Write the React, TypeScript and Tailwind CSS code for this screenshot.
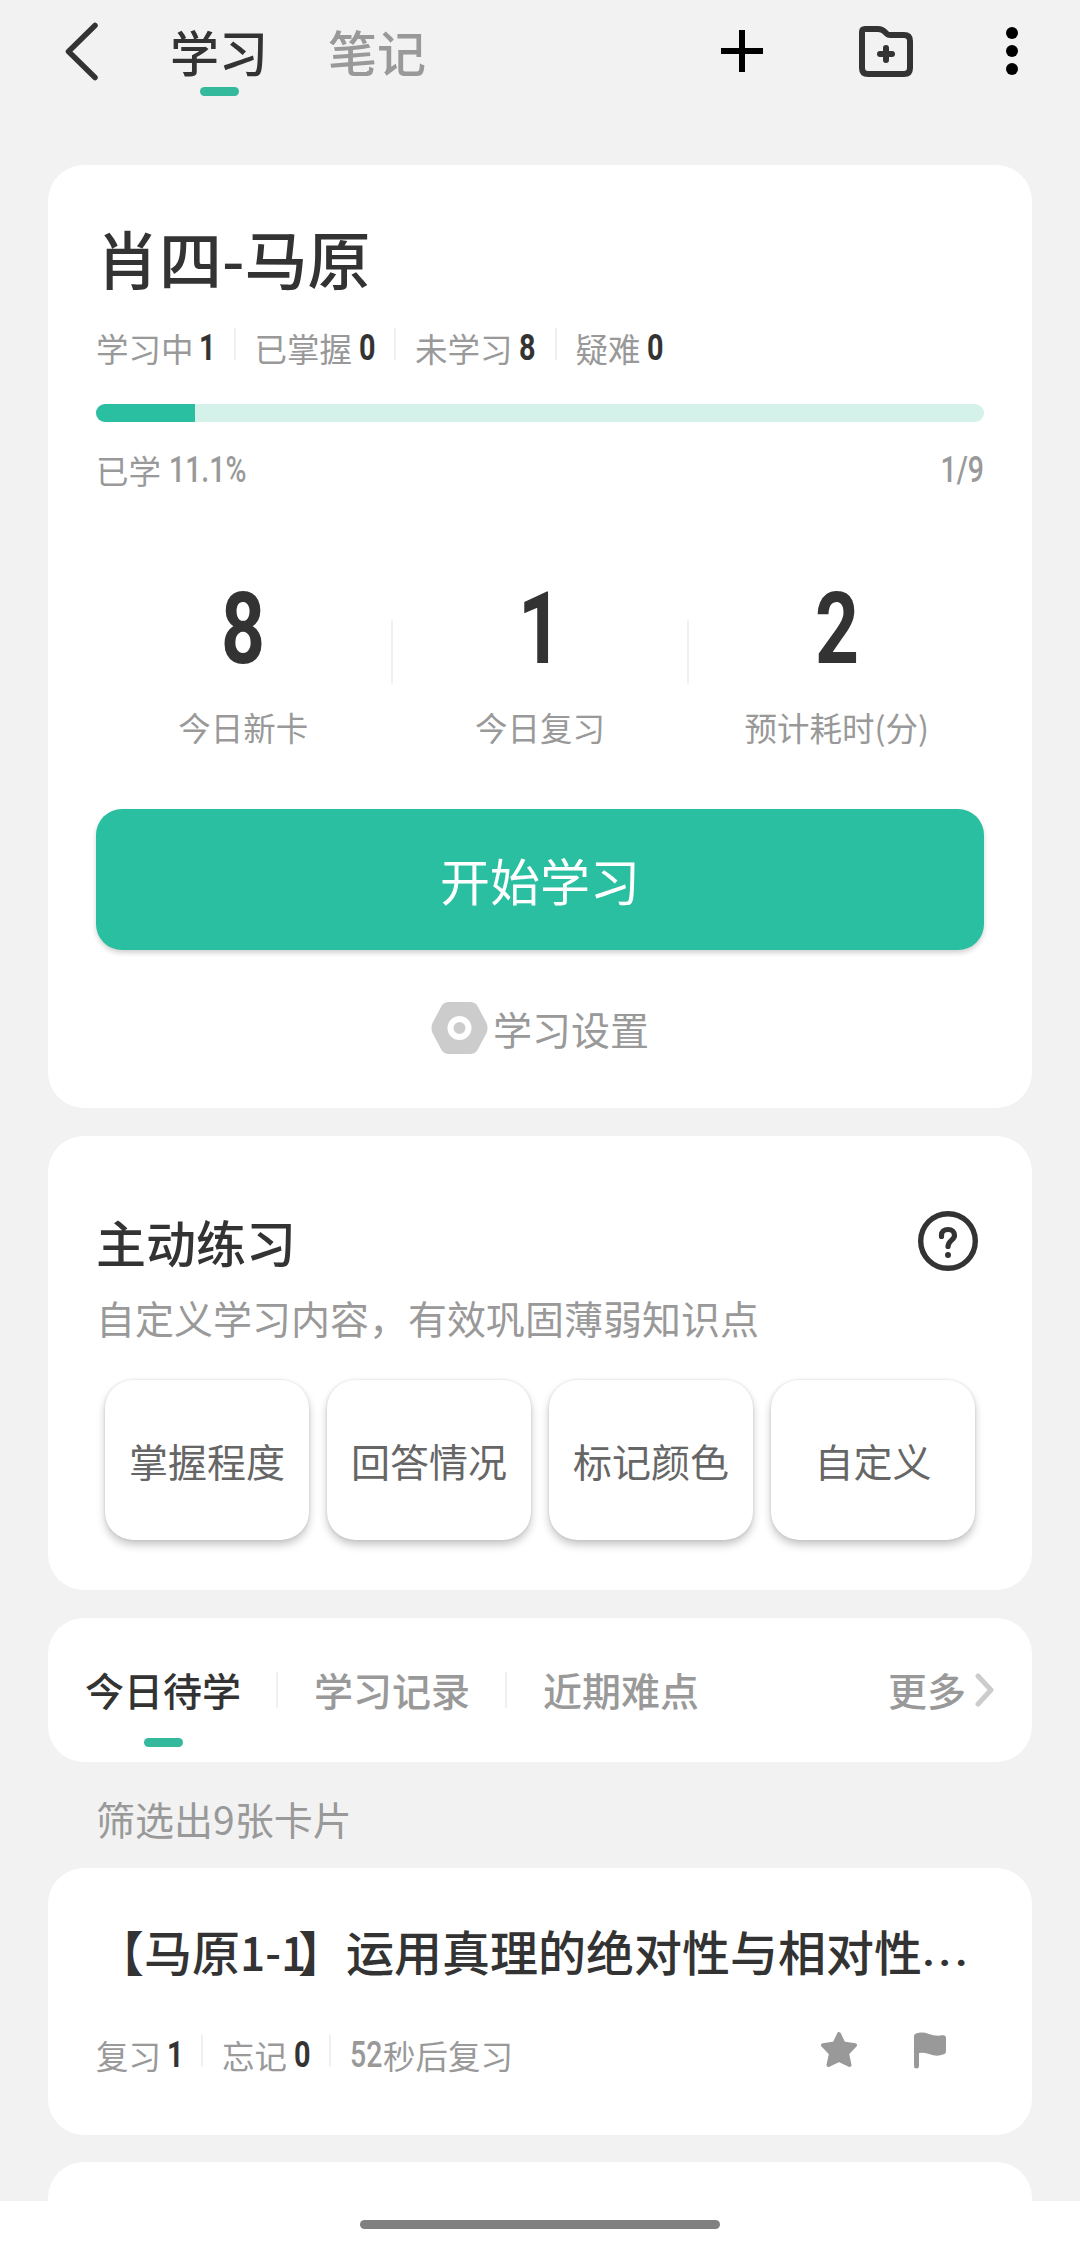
import { Fragment } from "react";
import clsx from "clsx";

const counters = [
  { label: "学习中", value: "1" },
  { label: "已掌握", value: "0" },
  { label: "未学习", value: "8" },
  { label: "疑难", value: "0" },
];

const stats = [
  { label: "今日新卡", value: "8" },
  { label: "今日复习", value: "1" },
  { label: "预计耗时(分)", value: "2" },
];

const practices = ["掌握程度", "回答情况", "标记颜色", "自定义"];

const tabs = ["今日待学", "学习记录", "近期难点"];

// small bold counter digit, squeezed to a condensed width
function Num({ value }: { value: string }) {
  return (
    <span
      className={clsx(
        "ml-[7px] flex justify-center text-[36px] font-bold text-[#333]",
        value === "1" ? "w-[14px]" : "w-[16px]"
      )}
    >
      <span className="inline-block scale-x-[0.8] font-[Roboto]">{value}</span>
    </span>
  );
}

function Divider({ className }: { className?: string }) {
  return <span className={clsx("w-[2px] shrink-0 bg-[#f0f0f0]", className)} />;
}

function Header() {
  return (
    <header className="flex h-[165px] items-start">
      <svg className="ml-[64px] mt-[20px] h-[63px] w-[36px] shrink-0" viewBox="0 0 36 63" fill="none">
        <path d="M31 5.500L4.500 31.500L31 57.500" stroke="#333" strokeWidth="5.500" strokeLinecap="round" strokeLinejoin="round" />
      </svg>
      <div className="ml-[70px] flex w-[98px] flex-col items-center">
        <span className="mt-[15px] text-[49px] leading-[72px] font-medium text-[#333]">学习</span>
        <span className="h-[9px] w-[39px] rounded-full bg-[#35b99d]" />
      </div>
      <span className="ml-[60px] mt-[15px] text-[49px] leading-[72px] font-medium text-[#999]">笔记</span>
      <svg className="ml-[295px] mt-[30px] h-[42px] w-[42px]" viewBox="0 0 42 42">
        <path d="M21 0V42M0 21H42" stroke="#000" strokeWidth="6" />
      </svg>
      <svg className="ml-[96px] mt-[26px] h-[51px] w-[54px]" viewBox="0 0 54 51" fill="none" stroke="#333" strokeLinecap="round" strokeLinejoin="round">
        <path d="M6 3H19Q23 3 26 6L28 8Q29 9 31 9H45Q51 9 51 15V42Q51 48 45 48H9Q3 48 3 42V6Q3 3 6 3Z" strokeWidth="6" />
        <path d="M27 22V34M21 28H33" strokeWidth="6" />
      </svg>
      <svg className="ml-[93px] mt-[27px] h-[48px] w-[12px]" viewBox="0 0 12 48">
        <circle cx="6" cy="6" r="6" />
        <circle cx="6" cy="24" r="6" />
        <circle cx="6" cy="42" r="6" />
      </svg>
    </header>
  );
}

function DeckCard() {
  return (
    <section className="h-[943px] rounded-[36px] bg-white px-[48px] pt-[48px]">
      <h1 className="h-[88px] text-[63px] leading-[88px] font-medium text-[#333]">肖四-马原</h1>
      <div className="mt-[23px] flex h-[48px] items-center leading-[48px]">
        {counters.map((c, i) => (
          <Fragment key={c.label}>
            {i > 0 && <Divider className="mx-[19px] -mt-[8px] h-[32px]" />}
            <span className="text-[32.500px] text-[#999]">{c.label}</span>
            <Num value={c.value} />
          </Fragment>
        ))}
      </div>
      <div className="mt-[32px] h-[18px] overflow-hidden rounded-full bg-[#d4f1ea]">
        <div className="h-full w-[99px] bg-[#29bfa0]" />
      </div>
      <div className="mt-[24px] flex h-[48px] items-center justify-between leading-[48px] text-[#999]">
        <div className="flex items-center">
          <span className="text-[32.500px]">已学</span>
          <span className="ml-[8px] w-[78px] origin-left scale-x-[0.79] font-[Roboto] text-[36px] font-medium">11.1%</span>
        </div>
        <span className="origin-right scale-x-[0.79] font-[Roboto] text-[36px] font-medium">1/9</span>
      </div>

      <div className="mt-[77px] flex h-[180px]">
        {stats.map((s, i) => (
          <Fragment key={s.label}>
            {i > 0 && <Divider className="mt-[49px] h-[64px]" />}
            <div className="flex flex-1 flex-col items-center">
              <span className="h-[116px] scale-x-[0.76] font-[Roboto] text-[101px] leading-[116px] font-bold text-[#333]">
                {s.value}
              </span>
              <span className="mt-[16px] text-[32.500px] leading-[48px] text-[#999]">{s.label}</span>
            </div>
          </Fragment>
        ))}
      </div>

      <button className="mt-[58px] flex h-[141px] w-full items-center justify-center rounded-[26px] bg-[#29bfa0] text-[50px] text-white shadow-[0_3px_5px_rgba(0,0,0,0.18)]">
        开始学习
      </button>
      <div className="mt-[48px] flex h-[60px] items-center justify-center">
        <svg className="h-[54px] w-[57px]" viewBox="0 0 57 54">
          <path d="M18 1H39Q44 1 46.500 5L55.500 22Q57.500 27 55.500 32L46.500 49Q44 53 39 53H18Q13 53 10.500 49L1.500 32Q-.5 27 1.500 22L10.500 5Q13 1 18 1Z" fill="#ccc" />
          <circle cx="28.500" cy="27" r="9" fill="#ccc" stroke="#fff" strokeWidth="6" />
        </svg>
        <span className="ml-[5px] text-[39px] leading-[60px] text-[#999]">学习设置</span>
      </div>
    </section>
  );
}

function PracticeCard() {
  return (
    <section className="mt-[28px] h-[454px] rounded-[36px] bg-white px-[48px] pt-[66px]">
      <div className="flex h-[78px] items-center justify-between">
        <h2 className="text-[50px] leading-[72px] font-medium text-[#333]">主动练习</h2>
        <svg className="mr-[6px] h-[60px] w-[60px]" viewBox="0 0 60 60" fill="none" stroke="#333">
          <circle cx="30" cy="30" r="27.300" strokeWidth="5.400" />
          <path d="M23.500 25.500V24C23.500 20.500 26 18.500 30 18.500C34 18.500 36.500 21 36.500 24.500C36.500 29 30 29.500 30 35.500" strokeWidth="5.200" strokeLinecap="round" />
          <circle cx="30" cy="44" r="3" fill="#333" stroke="none" />
        </svg>
      </div>
      <p className="mt-[7px] text-[39px] leading-[60px] text-[#999]">自定义学习内容，有效巩固薄弱知识点</p>
      <div className="mx-[9px] mt-[33px] grid grid-cols-4 gap-[18px]">
        {practices.map((p) => (
          <button
            key={p}
            className="h-[160px] rounded-[28px] bg-white text-[39px] text-[#666] shadow-[0_5px_8px_rgba(0,0,0,0.22),0_0_3px_rgba(0,0,0,0.12)]"
          >
            {p}
          </button>
        ))}
      </div>
    </section>
  );
}

function TabsCard() {
  return (
    <section className="mt-[28px] flex h-[144px] rounded-[36px] bg-white pl-[37px] pr-[37px] pt-[41px]">
      {tabs.map((t, i) => (
        <Fragment key={t}>
          {i > 0 && <Divider className="ml-[35px] mr-[36px] mt-[13px] h-[36px]" />}
          <div className="flex flex-col items-center">
            <span
              className={clsx(
                "text-[39px] leading-[60px] font-medium",
                i === 0 ? "text-[#333]" : "text-[#999]"
              )}
            >
              {t}
            </span>
            {i === 0 && <span className="mt-[19px] h-[9px] w-[39px] rounded-full bg-[#35b99d]" />}
          </div>
        </Fragment>
      ))}
      <span className="ml-auto text-[39px] leading-[60px] font-medium text-[#999]">更多</span>
      <svg className="ml-[9px] mt-[14px] h-[34px] w-[20px]" viewBox="0 0 20 34" fill="none">
        <path d="M3 3L16 17L3 31" stroke="#ccc" strokeWidth="5" strokeLinecap="round" strokeLinejoin="round" />
      </svg>
    </section>
  );
}

function CardItem() {
  return (
    <section className="mt-[20px] h-[267px] rounded-[36px] bg-white px-[48px] pt-[46px]">
      <h3 className="flex text-[48px] leading-[72px] font-medium whitespace-nowrap text-[#333]">
        <span>【马原</span>
        <span className="w-[58px] origin-left scale-x-[0.92]">1-1</span>
        <span>】运用真理的绝对性与相对性</span>
        <span className="font-[Roboto] tracking-[3px]">...</span>
      </h3>
      <div className="mt-[45px] flex h-[48px] items-center leading-[48px]">
        <span className="text-[32.500px] text-[#999]">复习</span>
        <Num value="1" />
        <Divider className="mx-[19px] -mt-[8px] h-[32px]" />
        <span className="text-[32.500px] text-[#999]">忘记</span>
        <Num value="0" />
        <Divider className="mx-[19px] -mt-[8px] h-[32px]" />
        <span className="w-[33px] origin-left scale-x-[0.79] font-[Roboto] text-[36px] font-medium text-[#999]">52</span>
        <span className="text-[32.500px] text-[#999]">秒后复习</span>
        <svg className="-mt-[12px] ml-auto h-[37px] w-[38px]" viewBox="0 0 38 37">
          <path d="M19 3L23.500 12.500L35 14.200L27 22.500L29.500 34L19 29L8.500 34L11 22.500L3 14.200L14.500 12.500Z" fill="#999" stroke="#999" strokeWidth="4" strokeLinejoin="round" />
        </svg>
        <svg className="-mt-[10px] mr-[37px] ml-[56px] h-[37px] w-[33px]" viewBox="0 0 33 37">
          <path d="M0 4Q0 2 2 1.500Q8-.5 15 2Q22 4.500 28 3.300Q32 2.500 32 6V19Q32 22 29 22.500Q23 25 15 22Q9 20 5 21V34Q5 36.500 2.500 36.500Q0 36.500 0 34Z" fill="#999" />
        </svg>
      </div>
    </section>
  );
}

export default function App() {
  return (
    <div className="flex h-[2244px] w-[1080px] flex-col overflow-hidden bg-[#f2f2f2] font-['Noto_Sans_CJK_SC',sans-serif]">
      <Header />
      <main className="h-[2036px] overflow-hidden px-[48px]">
        <DeckCard />
        <PracticeCard />
        <TabsCard />
        <p className="mt-[26px] pl-[48px] text-[39px] leading-[60px] text-[#999]">筛选出9张卡片</p>
        <CardItem />
        <section className="mt-[27px] h-[120px] rounded-[36px] bg-white" />
      </main>
      <footer className="flex h-[43px] justify-center bg-white pt-[19px]">
        <div className="h-[9px] w-[360px] rounded-full bg-[#808080]" />
      </footer>
    </div>
  );
}
